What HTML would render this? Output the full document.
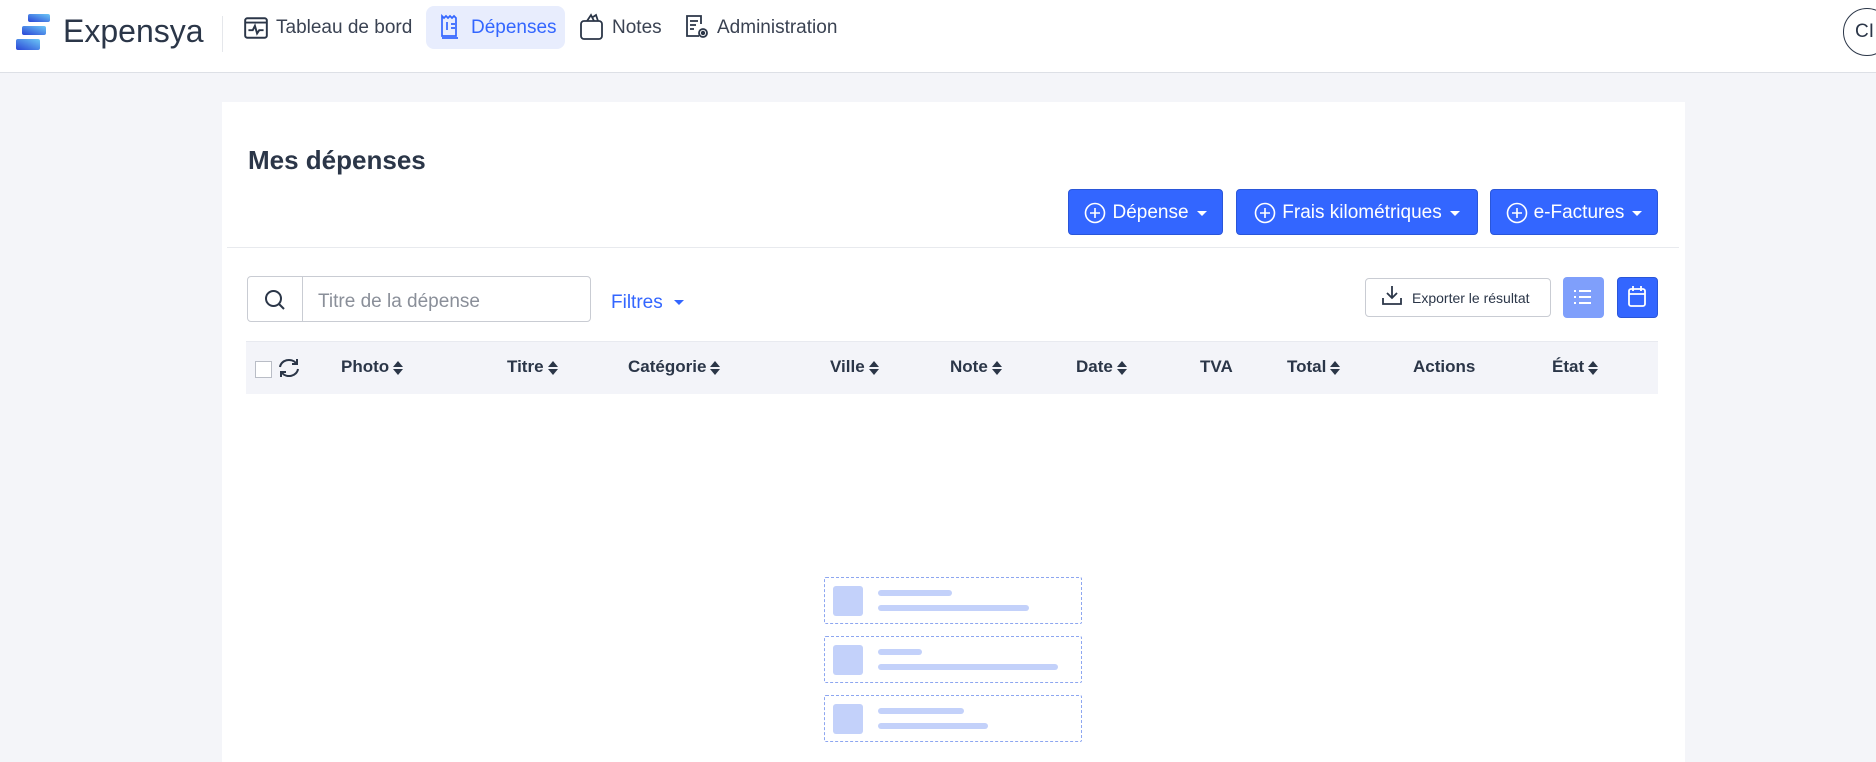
<!DOCTYPE html>
<html><head><meta charset="utf-8"><style>
*{box-sizing:border-box;margin:0;padding:0}
body{width:1876px;height:746px;overflow:hidden;background:#f4f5f9;font-family:"Liberation Sans",sans-serif;color:#2b3648;position:relative}
.a{position:absolute}
.nav{left:0;top:0;width:1876px;height:73px;background:#fff;border-bottom:1px solid #dde0e6}
.navt{font-size:19px;color:#3a4252;top:17px}
.card{left:222px;top:102px;width:1463px;height:660px;background:#fff}
.btn{background:#3366ff;border:1px solid #2a56d9;border-radius:4px;color:#fff;font-size:19px;height:46px;top:189px;display:flex;align-items:center;justify-content:center;gap:6px;padding-top:2px}
.car{display:inline-block;border-left:5px solid transparent;border-right:5px solid transparent;border-top:5px solid currentColor;margin-left:2px}
.th{font-weight:bold;font-size:17px;top:357px;color:#2b3648}
.srt{display:inline-block;vertical-align:middle;margin-left:4px;width:10px;height:14px;position:relative}
.srt:before{content:"";position:absolute;top:0;left:0;border-left:5px solid transparent;border-right:5px solid transparent;border-bottom:6px solid #2b3648}
.srt:after{content:"";position:absolute;bottom:0;left:0;border-left:5px solid transparent;border-right:5px solid transparent;border-top:6px solid #2b3648}
.ph{left:824px;width:258px;height:47px;border:1.5px dashed #8da6f0;border-radius:2px}
.ph i{position:absolute;left:8px;top:8px;width:30px;height:30px;background:#c3d1fa;border-radius:3px}
.ph b{position:absolute;height:6px;background:#c3d1fa;border-radius:3px;left:53px}
</style></head><body>
<div class="a nav"></div>
<svg class="a" style="left:16px;top:14px" width="38" height="36" viewBox="0 0 38 36"><defs><linearGradient id="g" x1="1" y1="0" x2="0" y2="1"><stop offset="0" stop-color="#6cc8f7"/><stop offset="1" stop-color="#2a45d6"/></linearGradient></defs><rect x="12" y="0" width="22" height="8" rx="2" fill="url(#g)"/><rect x="6" y="12" width="24" height="9" rx="2" fill="url(#g)"/><rect x="0" y="25" width="24" height="11" rx="2" fill="url(#g)"/></svg>
<div class="a" style="left:63px;top:13px;font-size:32px;color:#2b3648">Expensya</div>
<div class="a" style="left:222px;top:16px;width:1px;height:36px;background:#e5e7eb"></div>
<svg class="a" style="left:243px;top:15px" width="26" height="26" viewBox="0 0 24 24" fill="none" stroke="#2b3648" stroke-width="1.8"><rect x="2" y="3" width="20" height="18" rx="2"/><path d="M2 7h20M5 14h4l2-4 2 7 2-3h4"/></svg>
<div class="a navt" style="left:276px">Tableau de bord</div>
<div class="a" style="left:426px;top:6px;width:139px;height:43px;background:#e8edfd;border-radius:8px"></div>
<svg class="a" style="left:438px;top:14px" width="24" height="26" viewBox="0 0 24 26" fill="none" stroke="#3366ff" stroke-width="1.7"><path d="M4 2l2 2 2-2 2 2 2-2 2 2 2-2 2 2v18H4z"/><path d="M4 24h16M9 8v8M13 10h4M13 14h4"/></svg>
<div class="a navt" style="left:471px;color:#3366ff">Dépenses</div>
<svg class="a" style="left:579px;top:13px" width="26" height="28" viewBox="0 0 26 28" fill="none" stroke="#2b3648" stroke-width="1.8"><rect x="2" y="8" width="21" height="18" rx="3"/><path d="M8 8l4-6 3 6M14 4l3-2 2 6"/></svg>
<div class="a navt" style="left:612px">Notes</div>
<svg class="a" style="left:684px;top:14px" width="26" height="26" viewBox="0 0 26 26" fill="none" stroke="#2b3648" stroke-width="1.8"><path d="M15 22H3V2h14v8"/><path d="M6 7h8M6 11h6M6 15h4"/><circle cx="19" cy="19" r="4"/><circle cx="19" cy="19" r="1.3" fill="#2b3648"/></svg>
<div class="a navt" style="left:717px">Administration</div>
<div class="a" style="left:1843px;top:8px;width:48px;height:48px;border:1.5px solid #2b3648;border-radius:50%;font-size:19px;padding:12px 0 0 11px">CI</div>

<div class="a card"></div>
<div class="a" style="left:248px;top:145px;font-size:26px;font-weight:bold;color:#2b3648">Mes dépenses</div>
<div class="a btn" style="left:1068px;width:155px"><svg width="22" height="22" viewBox="0 0 22 22" fill="none" stroke="#fff" stroke-width="1.6"><circle cx="11" cy="11" r="9.5"/><path d="M11 6v10M6 11h10"/></svg>Dépense<span class="car"></span></div>
<div class="a btn" style="left:1236px;width:242px"><svg width="22" height="22" viewBox="0 0 22 22" fill="none" stroke="#fff" stroke-width="1.6"><circle cx="11" cy="11" r="9.5"/><path d="M11 6v10M6 11h10"/></svg>Frais kilométriques<span class="car"></span></div>
<div class="a btn" style="left:1490px;width:168px"><svg width="22" height="22" viewBox="0 0 22 22" fill="none" stroke="#fff" stroke-width="1.6"><circle cx="11" cy="11" r="9.5"/><path d="M11 6v10M6 11h10"/></svg>e-Factures<span class="car"></span></div>
<div class="a" style="left:227px;top:247px;width:1452px;height:1px;background:#e8eaee"></div>

<div class="a" style="left:247px;top:276px;width:344px;height:46px;border:1px solid #c9ccd3;border-radius:4px"></div>
<div class="a" style="left:302px;top:277px;width:1px;height:44px;background:#c9ccd3"></div>
<svg class="a" style="left:263px;top:288px" width="24" height="24" viewBox="0 0 24 24" fill="none" stroke="#2b3648" stroke-width="2"><circle cx="10.5" cy="10.5" r="7.5"/><path d="M16 16l5 5"/></svg>
<div class="a" style="left:318px;top:291px;font-size:19px;color:#8a8f99">Titre de la dépense</div>
<div class="a" style="left:611px;top:292px;font-size:19px;color:#3366ff">Filtres <span class="car" style="margin-left:6px;vertical-align:middle"></span></div>

<div class="a" style="left:1365px;top:278px;width:186px;height:39px;border:1px solid #c9ccd3;border-radius:4px;font-size:14px;color:#2b3648;padding:11px 0 0 46px">Exporter le résultat</div>
<svg class="a" style="left:1381px;top:284px" width="22" height="22" viewBox="0 0 22 22" fill="none" stroke="#2b3648" stroke-width="1.8"><path d="M11 2v12M6 9l5 5 5-5M2 14v6h18v-6"/></svg>
<div class="a" style="left:1563px;top:277px;width:41px;height:41px;background:#7f9ffb;border-radius:4px"></div>
<svg class="a" style="left:1572px;top:286px" width="22" height="22" viewBox="0 0 22 22" stroke="#fff" stroke-width="2"><path d="M7 5h12M7 11h12M7 17h12M2 5h2M2 11h2M2 17h2"/></svg>
<div class="a" style="left:1617px;top:277px;width:41px;height:41px;background:#3366ff;border:1px solid #2a56d9;border-radius:4px"></div>
<svg class="a" style="left:1626px;top:285px" width="22" height="24" viewBox="0 0 22 24" fill="none" stroke="#fff" stroke-width="1.8"><rect x="3" y="4" width="16" height="17" rx="2"/><path d="M3 9h16M7 1v5M15 1v5"/></svg>

<div class="a" style="left:246px;top:341px;width:1412px;height:53px;background:#f3f4f9;border-top:1px solid #e8eaf0"></div>
<div class="a" style="left:255px;top:361px;width:17px;height:17px;border:1px solid #b9bdc6;background:#fff"></div>
<svg class="a" style="left:277px;top:357px" width="24" height="22" viewBox="0 0 24 22" fill="none" stroke="#2b3648" stroke-width="2"><path d="M3 10a9 8 0 0 1 16-4M21 12a9 8 0 0 1-16 4"/><path d="M20 2v5h-5M4 20v-5h5"/></svg>
<div class="a th" style="left:341px">Photo<span class="srt"></span></div>
<div class="a th" style="left:507px">Titre<span class="srt"></span></div>
<div class="a th" style="left:628px">Catégorie<span class="srt"></span></div>
<div class="a th" style="left:830px">Ville<span class="srt"></span></div>
<div class="a th" style="left:950px">Note<span class="srt"></span></div>
<div class="a th" style="left:1076px">Date<span class="srt"></span></div>
<div class="a th" style="left:1200px">TVA</div>
<div class="a th" style="left:1287px">Total<span class="srt"></span></div>
<div class="a th" style="left:1413px">Actions</div>
<div class="a th" style="left:1552px">État<span class="srt"></span></div>

<div class="a ph" style="top:577px"><i></i><b style="top:12px;width:74px"></b><b style="top:27px;width:151px"></b></div>
<div class="a ph" style="top:636px"><i></i><b style="top:12px;width:44px"></b><b style="top:27px;width:180px"></b></div>
<div class="a ph" style="top:695px"><i></i><b style="top:12px;width:86px"></b><b style="top:27px;width:110px"></b></div>
</body></html>
